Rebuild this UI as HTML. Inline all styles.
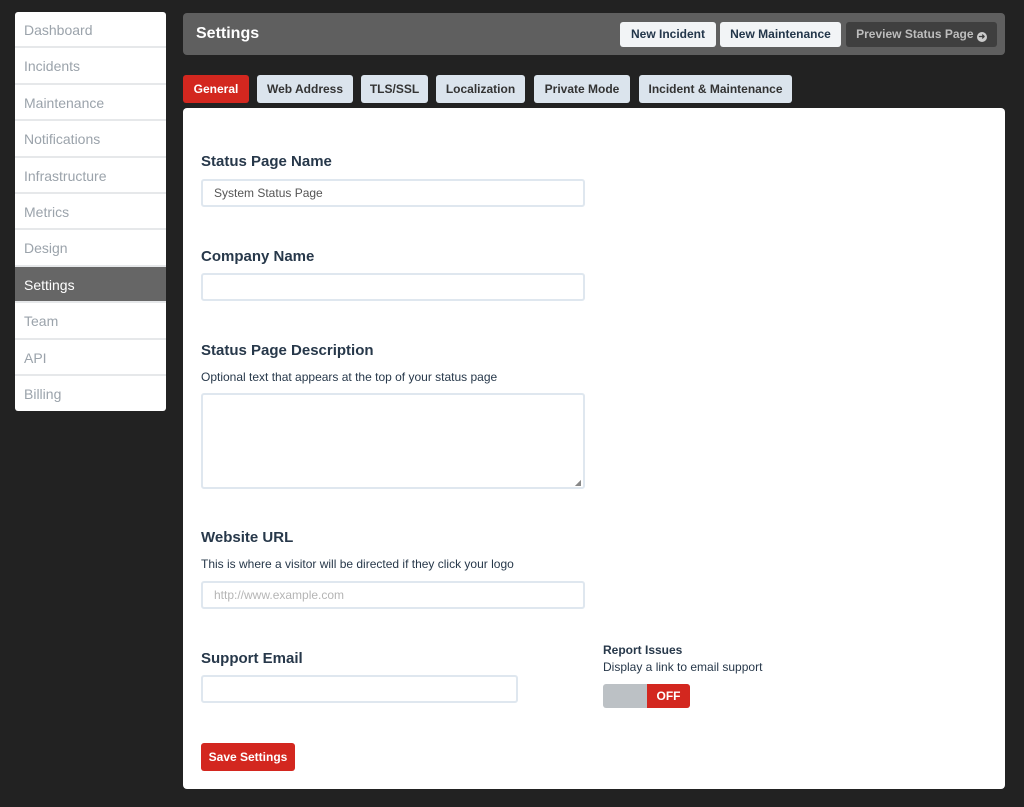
<!DOCTYPE html>
<html><head><meta charset="utf-8"><style>
*{box-sizing:border-box;margin:0;padding:0}
body{width:1024px;height:807px;background:#222;font-family:"Liberation Sans",sans-serif;position:relative;overflow:hidden}
.a{position:absolute}
.side{left:15px;top:12px;width:151px;height:399px;background:#fff;border-radius:3px;overflow:hidden}
.side div{height:36.4px;border-bottom:2px solid #e6e8ea;color:#9ba3ab;font-size:14px;line-height:36px;padding-left:9px}
.side div.on{background:#666;color:#fff}
.hdr{left:183px;top:13px;width:822px;height:42px;background:#5f5f5f;border-radius:4px}
.btn{position:absolute;top:22px;height:25px;border-radius:3px;background:#f2f4f6;color:#23364a;font-size:12px;font-weight:bold;text-align:center;line-height:25px}
.tab{position:absolute;top:75px;height:28px;border-radius:3px;background:#dbe4ed;color:#333;font-size:12px;font-weight:bold;text-align:center;line-height:28px}
.panel{left:183px;top:108px;width:822px;height:681px;background:#fff;border-radius:4px}
.lbl{position:absolute;left:201px;font-size:15px;font-weight:bold;color:#27384a}
.help{position:absolute;left:201px;font-size:12px;color:#27384a}
.inp{position:absolute;left:201px;width:384px;height:28px;border:2px solid #dfe7ef;border-radius:3px;font-size:12px;color:#555;padding-left:11px;line-height:24px;background:#fff}
</style></head><body>
<div class="a side">
<div>Dashboard</div><div>Incidents</div><div>Maintenance</div><div>Notifications</div><div>Infrastructure</div><div>Metrics</div><div>Design</div><div class="on">Settings</div><div>Team</div><div>API</div><div style="border:none">Billing</div>
</div>
<div class="a hdr"><div class="a" style="left:13px;top:12px;color:#fff;font-size:16px;font-weight:bold">Settings</div></div>
<div class="btn" style="left:620px;width:96px">New Incident</div>
<div class="btn" style="left:720px;width:121px">New Maintenance</div>
<div class="btn" style="left:846px;width:151px;background:#3f3f3f;color:#bdbdbd">Preview Status Page <span style="display:inline-block;width:10px;height:10px;border-radius:50%;background:#ccc;color:#3f3f3f;font-size:8px;line-height:10px;vertical-align:-1px">➜</span></div>
<div class="tab" style="left:183px;width:66px;background:#d3271f;color:#fff">General</div>
<div class="tab" style="left:257px;width:96px">Web Address</div>
<div class="tab" style="left:361px;width:67px">TLS/SSL</div>
<div class="tab" style="left:436px;width:89px">Localization</div>
<div class="tab" style="left:534px;width:96px">Private Mode</div>
<div class="tab" style="left:639px;width:153px">Incident &amp; Maintenance</div>
<div class="a panel"></div>
<div class="lbl" style="top:153px">Status Page Name</div>
<div class="inp" style="top:179px">System Status Page</div>
<div class="lbl" style="top:248px">Company Name</div>
<div class="inp" style="top:273px"></div>
<div class="lbl" style="top:342px">Status Page Description</div>
<div class="help" style="top:370px">Optional text that appears at the top of your status page</div>
<div class="inp" style="top:393px;height:96px"><span class="a" style="right:2px;bottom:0;font-size:8px;color:#888;line-height:8px">◢</span></div>
<div class="lbl" style="top:529px">Website URL</div>
<div class="help" style="top:557px">This is where a visitor will be directed if they click your logo</div>
<div class="inp" style="top:581px;color:#b5b5b5">http://www.example.com</div>
<div class="lbl" style="top:650px">Support Email</div>
<div class="inp" style="top:675px;width:317px"></div>
<div class="a" style="left:603px;top:643px;font-size:12px;font-weight:bold;color:#27384a">Report Issues</div>
<div class="a" style="left:603px;top:660px;font-size:12px;color:#27384a">Display a link to email support</div>
<div class="a" style="left:603px;top:684px;width:87px;height:24px;border-radius:3px;overflow:hidden;background:#bcc1c5">
<div class="a" style="left:44px;top:0;width:43px;height:24px;background:#d3271f;color:#fff;font-size:12px;font-weight:bold;text-align:center;line-height:24px">OFF</div></div>
<div class="a" style="left:201px;top:743px;width:94px;height:28px;border-radius:3px;background:#d3271f;color:#fff;font-size:12px;font-weight:bold;text-align:center;line-height:28px">Save Settings</div>
</body></html>
